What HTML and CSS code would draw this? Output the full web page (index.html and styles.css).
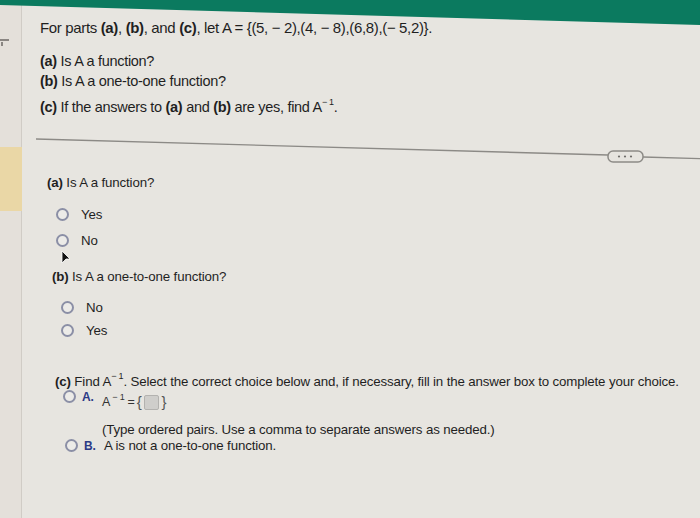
FILE: index.html
```html
<!DOCTYPE html>
<html>
<head>
<meta charset="utf-8">
<link rel="stylesheet" href="styles.css">
</head>
<body>
<div class="topbar"></div>
<div class="layout">
  <aside class="sidebar">
    <div class="mark">
      <span class="mark-dash"></span>
      <span class="mark-tick"></span>
    </div>
    <div class="yellow"></div>
  </aside>
  <main class="main">
    <div class="intro">
      <p class="title">For parts <b>(a)</b>, <b>(b)</b>, and <b>(c)</b>, let A = {(5, − 2),(4, − 8),(6,8),(− 5,2)}.</p>
      <p class="q q-a"><b>(a)</b> Is A a function?</p>
      <p class="q"><b>(b)</b> Is A a one-to-one function?</p>
      <p class="q q-c"><b>(c)</b> If the answers to <b>(a)</b> and <b>(b)</b> are yes, find A<sup>− 1</sup>.</p>
    </div>

    <div class="divider">
      <svg class="divider-svg" viewBox="0 0 678 28" preserveAspectRatio="none">
        <line x1="0" y1="3" x2="572" y2="19" stroke="#8c8a86" stroke-width="1.4"/>
        <line x1="607" y1="21" x2="678" y2="23" stroke="#8c8a86" stroke-width="1.4"/>
        <rect x="572" y="15" width="35" height="11" rx="5" fill="#e6e4df" stroke="#8d8b87" stroke-width="1.5"/>
        <circle cx="583" cy="20.5" r="1.1" fill="#6f6d6a"/>
        <circle cx="589" cy="20.5" r="1.1" fill="#6f6d6a"/>
        <circle cx="595" cy="20.5" r="1.1" fill="#6f6d6a"/>
      </svg>
    </div>

    <section class="part part-a">
      <p class="part-q"><b>(a)</b> Is A a function?</p>
      <div class="options">
        <label class="opt"><span class="radio"></span><span>Yes</span></label>
        <label class="opt"><span class="radio"></span><span>No</span></label>
      </div>
      <svg class="cursor" width="12" height="14" viewBox="0 0 12 14">
        <path d="M2 13 L2 1 L10 9 L6 9 Z" fill="#111" stroke="#fff" stroke-width="0.8"/>
      </svg>
    </section>

    <section class="part part-b">
      <p class="part-q"><b>(b)</b> Is A a one-to-one function?</p>
      <div class="options">
        <label class="opt"><span class="radio"></span><span>No</span></label>
        <label class="opt"><span class="radio"></span><span>Yes</span></label>
      </div>
    </section>

    <section class="part part-c">
      <p class="part-q"><b>(c)</b> Find A<sup>− 1</sup>. Select the correct choice below and, if necessary, fill in the answer box to complete your choice.</p>
      <div class="choices">
        <div class="choice">
          <span class="radio"></span>
          <span class="letter">A.</span>
          <div class="choice-body">
            <div class="eq"><span class="eq-lhs">A<sup>− 1</sup></span><span class="eq-sign">=</span><span class="brace">{</span><span class="box"></span><span class="brace">}</span></div>
            <div class="hint">(Type ordered pairs. Use a comma to separate answers as needed.)</div>
          </div>
        </div>
        <div class="choice choice-b">
          <span class="radio"></span>
          <span class="letter">B.</span>
          <div class="choice-body">A is not a one-to-one function.</div>
        </div>
      </div>
    </section>
  </main>
</div>
</body>
</html>
```
FILE: styles.css
```css
* { box-sizing: border-box; }
html, body { margin: 0; padding: 0; }
body {
  width: 700px;
  height: 518px;
  overflow: hidden;
  background: #e7e5e0;
  font-family: "Liberation Sans", Arial, sans-serif;
  color: #1f1f1f;
}
p { margin: 0; }
b { font-weight: bold; }
sup { font-size: 9px; vertical-align: 7px; line-height: 0; }

.topbar {
  height: 5px;
  background: #0b7a5f;
  position: relative;
  z-index: 2;
}
.topbar::after {
  content: "";
  position: absolute;
  left: 0;
  right: 0;
  top: 5px;
  height: 20px;
  background: #0b7a5f;
  clip-path: polygon(0 0, 100% 0, 100% 100%);
}

.layout {
  display: grid;
  grid-template-columns: 22px 1fr;
  height: 513px;
}
.sidebar {
  background: #e4e0da;
  border-right: 1px solid #d0ccc6;
  display: flex;
  flex-direction: column;
}
.mark {
  margin-top: 30px;
  height: 14px;
}
.mark-dash {
  display: block;
  width: 9px;
  height: 2px;
  background: #8a8682;
  margin-top: 4px;
}
.mark-tick {
  display: block;
  width: 2px;
  height: 4px;
  background: #8a8682;
  margin: 1px 0 0 1px;
}
.yellow {
  margin-top: 98px;
  height: 64px;
  background: #ead7a6;
  margin-right: -1px;
}

.main {
  padding-left: 18px;
  display: flex;
  flex-direction: column;
}
.intro { padding-top: 14px; }
.title { font-size: 15px; line-height: 18px; letter-spacing: -0.35px; }
.q { font-size: 14.5px; line-height: 20px; letter-spacing: -0.3px; }
.q-a { margin-top: 14px; }
.q-c { margin-top: 6px; }

.divider { margin-top: 19px; height: 28px; }
.divider-svg { display: block; width: 678px; height: 28px; margin-left: -4px; }

.part { font-size: 13.3px; letter-spacing: -0.15px; position: relative; }
.part-q { line-height: 18px; }
.part-a { margin-top: 10px; padding-left: 7px; }
.part-b { margin-top: 19px; padding-left: 12px; }
.part-c { margin-top: 34px; padding-left: 15px; }

.options {
  display: flex;
  flex-direction: column;
  gap: 8px;
  margin-top: 13px;
  padding-left: 9px;
}
.part-b .options { margin-top: 12px; gap: 5px; }
.opt {
  display: flex;
  align-items: center;
  gap: 12px;
  height: 18px;
}
.radio {
  width: 13px;
  height: 13px;
  border: 2px solid #8b8fa6;
  border-radius: 50%;
  background: #ecebe8;
  flex: none;
}
.cursor {
  position: absolute;
  left: 20px;
  top: 76px;
}

.choices { margin-top: -3px; display: flex; flex-direction: column; }
.choice { display: flex; align-items: flex-start; padding-left: 8px; }
.choice .radio { margin-top: 2px; margin-right: 6px; }
.letter { font-weight: bold; color: #2c3a86; font-size: 12px; width: 20px; line-height: 18px; }
.choice-body { line-height: 18px; }
.eq { display: flex; align-items: center; height: 24px; font-size: 12.5px; color: #333; padding-top: 4px; }
.eq-lhs { line-height: 14px; }
.eq sup { font-size: 9px; vertical-align: 6px; margin-left: 2px; }
.eq-sign { margin-left: 3px; }
.brace { font-size: 15px; color: #555; margin-left: 2px; }
.box {
  width: 15px;
  height: 15px;
  background: #cfcecb;
  border: 1px solid #b3b2af;
  border-radius: 2px;
  margin: 0 1px 0 2px;
}
.hint { margin-top: 9px; }
.choice-b { padding-left: 10px; margin-top: -2px; }
```
